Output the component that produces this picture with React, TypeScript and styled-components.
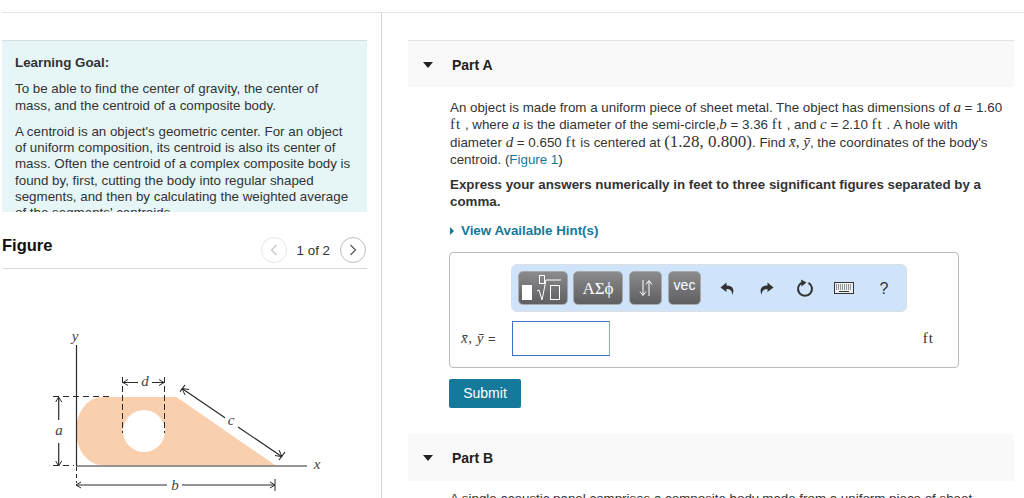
import React from "react";
import styled, { createGlobalStyle } from "styled-components";

const GlobalStyle = createGlobalStyle`
  html, body { margin: 0; padding: 0; background: #fff; }
  body { font-family: "Liberation Sans", Arial, sans-serif; color: #333; }
`;

const Page = styled.div`
  width: 1024px;
  height: 498px;
  overflow: hidden;
  padding-top: 12px;
  box-sizing: border-box;
`;

const Columns = styled.div`
  display: grid;
  grid-template-columns: 380px 1fr;
  height: 486px;
  margin-left: 2px;
  border-top: 1px solid #e2e4e6;
`;

const LeftColumn = styled.div`
  border-right: 1px solid #cdd5de;
  padding-top: 27px;
`;

const GoalBox = styled.div`
  width: 365px;
  height: 172px;
  box-sizing: border-box;
  overflow: hidden;
  background: #e6f6f7;
  border-top: 1px solid #d5dde2;
  padding: 14px 13px 0;
  font-size: 13.35px;
  line-height: 16.3px;
`;

const GoalTitle = styled.div`
  font-weight: bold;
  margin-bottom: 10px;
`;

const GoalText = styled.p`
  margin: 0 0 10px;
`;

const FigureHead = styled.div`
  width: 365px;
  height: 57px;
  box-sizing: border-box;
  display: flex;
  align-items: center;
  justify-content: space-between;
  border-bottom: 1px solid #d5d9dd;
  padding-top: 11px;
`;

const FigureTitle = styled.h3`
  margin: 0;
  font-size: 16.5px;
  color: #111;
`;

const Pager = styled.div`
  display: flex;
  align-items: center;
  gap: 10px;
  font-size: 13.35px;
  margin-right: 1px;
  margin-top: 8px;
`;

const PagerButton = styled.div<{ $off?: boolean }>`
  width: 24px;
  height: 24px;
  border-radius: 50%;
  border: 1px solid ${(p) => (p.$off ? "#e6e6e6" : "#bdbdbd")};
  display: flex;
  align-items: center;
  justify-content: center;
  color: ${(p) => (p.$off ? "#c4c4c4" : "#555")};
`;

const PagerCount = styled.span`
  margin-top: 2px;
`;

const FigureArt = styled.svg`
  display: block;
  margin: 51px 0 0 28px;
`;

const RightColumn = styled.div`
  padding: 27px 10px 0 26px;
`;

const PartHead = styled.div<{ $top?: boolean }>`
  height: 47px;
  display: flex;
  align-items: center;
  gap: 19px;
  padding: ${(p) => (p.$top ? "2px" : "0")} 0 0 15px;
  background: #f9f9f9;
  border-top: ${(p) => (p.$top ? "1px solid #e2e2e2" : "none")};
  box-sizing: border-box;
  font-size: 14px;
  font-weight: bold;
  color: #222;
`;

const Caret = styled.span`
  width: 0;
  height: 0;
  border-left: 5.500px solid transparent;
  border-right: 5.500px solid transparent;
  border-top: 6px solid #222;
`;

const PartBody = styled.div`
  padding: 12px 9px 0 42px;
  font-size: 13.35px;
  line-height: 17px;
`;

const Para = styled.p`
  margin: 0;
`;

const BoldPara = styled.p`
  margin: 9px 0 0;
  font-weight: bold;
  line-height: 16.5px;
`;

const Var = styled.i`
  font-family: "Liberation Serif", serif;
  font-size: 15px;
  line-height: 1;
`;

const Unit = styled.span`
  font-family: "Liberation Serif", serif;
  font-size: 15px;
  letter-spacing: 1px;
  line-height: 1;
`;

const BigMath = styled.span`
  font-family: "Liberation Serif", serif;
  font-size: 17px;
  line-height: 1;
`;

const Link = styled.span`
  color: #14799b;
`;

const Hint = styled.div`
  display: flex;
  align-items: center;
  gap: 7px;
  margin-top: 12px;
  font-weight: bold;
  color: #14799b;
`;

const HintCaret = styled.span`
  width: 0;
  height: 0;
  border-top: 4px solid transparent;
  border-bottom: 4px solid transparent;
  border-left: 4px solid #14799b;
`;

const AnswerBox = styled.div`
  width: 510px;
  height: 116px;
  box-sizing: border-box;
  margin: 13px 0 0 -1px;
  border: 1px solid #bcbcbc;
  border-radius: 4px;
  padding: 11px 24px 0 11px;
`;

const Toolbar = styled.div`
  width: 396px;
  height: 48px;
  box-sizing: border-box;
  margin-left: 50px;
  display: flex;
  align-items: center;
  padding-left: 6px;
  background: #cfe4fb;
  border: 1px solid #dcdfe2;
  border-radius: 6px;
`;

const ToolButton = styled.div<{ $w: number; $gap: number }>`
  width: ${(p) => p.$w}px;
  height: 34px;
  margin-right: ${(p) => p.$gap}px;
  box-sizing: border-box;
  border: 1px solid #a9a9a9;
  border-radius: 5px;
  background: linear-gradient(#8b8b8d, #5f5f61);
  color: #fff;
  display: flex;
  align-items: center;
  justify-content: center;
  flex: none;
`;

const SymbolText = styled.span`
  font-family: "Liberation Serif", serif;
  font-size: 17px;
`;

const VecText = styled.span`
  font-size: 14px;
  margin-top: -5px;
`;

const IconSlot = styled.div<{ $w: number }>`
  width: ${(p) => p.$w}px;
  display: flex;
  justify-content: center;
  flex: none;
  color: #333;
`;

const HelpMark = styled.span`
  font-size: 16px;
  color: #333;
`;

const AnswerRow = styled.div`
  display: flex;
  align-items: center;
  margin-top: 9px;
`;

const AnswerLabel = styled.div`
  width: 51px;
  font-size: 13px;
  letter-spacing: 0.5px;
  color: #444;
`;

const AnswerInput = styled.div`
  width: 98px;
  height: 35px;
  box-sizing: border-box;
  border: 1px solid #3b6fc9;
  border-right-color: #8aa8e0;
`;

const AnswerUnit = styled(Unit)`
  margin-left: auto;
`;

const SubmitButton = styled.div`
  width: 72px;
  height: 29px;
  margin: 11px 0 0 -1px;
  border-radius: 2px;
  background: #14799b;
  color: #fff;
  font-size: 14px;
  display: flex;
  align-items: center;
  justify-content: center;
`;

const PartB = styled.div`
  margin-top: 26px;
`;

const PartBText = styled(PartBody)`
  padding-top: 9px;
  white-space: nowrap;
  overflow: hidden;
`;

const FigureText = styled.text`
  font-family: "Liberation Serif", serif;
  font-style: italic;
  font-size: 15px;
  fill: #444;
  text-anchor: middle;
`;

function Figure() {
  return (
    <FigureArt width="310" height="178" viewBox="0 0 310 178">
      <path d="M72 77 H146.500 L245 145 H72 A26 34 0 0 1 72 77 Z" fill="#f9cfae" />
      <circle cx="114" cy="111" r="21" fill="#fff" />
      <g stroke="#2a2a2a" strokeWidth="1" fill="none">
        <path d="M46.500 25 V146 H277" strokeWidth="1.200" />
        <path d="M46.500 147 V163" strokeDasharray="4 3" />
        <path d="M23 76.500 H82 M23 145.500 H44" strokeDasharray="6 4" />
        <path d="M28.700 78 V100 M28.700 123 V145" strokeWidth="1.200" />
        <path d="M25.700 82 L28.700 77 L31.700 82 M25.700 141 L28.700 146 L31.700 141" />
        <path d="M92.500 57 V113 M134.500 57 V113" strokeDasharray="6 3" />
        <path d="M93 62.500 H108 M122 62.500 H134 M98 59.500 L93 62.500 L98 65.500 M129 59.500 L134 62.500 L129 65.500" />
        <path d="M152 68.500 L195 97.700 M208 107 L252 136.700 M150 71.700 L155 65 M249 140 L255 132" strokeWidth="1.200" />
        <path d="M152 68.500 L159 69.500 M152 68.500 L155 75 M252 136.700 L245 135.500 M252 136.700 L249 130" />
        <path d="M46 165 H137 M152 165 H245 M51 162 L46 165 L51 168 M240 162 L245 165 L240 168 M245 159 V171" />
      </g>
      <FigureText x="45" y="21">y</FigureText>
      <FigureText x="29" y="115">a</FigureText>
      <FigureText x="115" y="66">d</FigureText>
      <FigureText x="201" y="105">c</FigureText>
      <FigureText x="145" y="170">b</FigureText>
      <FigureText x="287" y="149">x</FigureText>
    </FigureArt>
  );
}

function TemplateIcon() {
  return (
    <svg width="46" height="30" viewBox="0 0 46 30" fill="none" stroke="#fff" strokeWidth="1">
      <rect x="2" y="12" width="10" height="15" fill="#fff" stroke="none" />
      <rect x="19.500" y="2.500" width="5" height="8" />
      <path d="M17 18 L19 17 L22 27 L26 7 H41" />
      <rect x="30.500" y="12.500" width="9" height="14" />
    </svg>
  );
}

function SortIcon() {
  return (
    <svg width="16" height="18" viewBox="0 0 16 18" fill="none" stroke="#fff" strokeWidth="1">
      <path d="M5 1 V16 M2 12.500 L5 16.500 L8 12.500 M11 17 V2 M8 5.500 L11 1.500 L14 5.500" />
    </svg>
  );
}

function UndoIcon({ flip }: { flip?: boolean }) {
  return (
    <svg width="15" height="15" viewBox="0 0 15 15" style={{ transform: flip ? "scaleX(-1)" : undefined }}>
      <path d="M6.500 1.500 L0.500 6.500 L6.500 11 V8 C10 8 12 9.500 12.500 14 C14.500 9 13.500 4.500 6.500 4.500 Z" fill="#333" />
    </svg>
  );
}

function ResetIcon() {
  return (
    <svg width="18" height="18" viewBox="0 0 18 18" fill="none">
      <path d="M5.500 3.800 A7 7 0 1 0 12.500 3.800" stroke="#333" strokeWidth="2" />
      <path d="M5 0.500 L10.500 3.500 L5.500 7.500 Z" fill="#333" />
    </svg>
  );
}

function KeyboardIcon() {
  return (
    <svg width="20" height="12" viewBox="0 0 20 12" fill="none">
      <rect x="0.500" y="0.500" width="19" height="11" fill="#eef2f5" stroke="#333" />
      <path d="M2 3 H18 M2 5 H18 M2 7 H18" stroke="#333" strokeDasharray="1 1" />
      <path d="M5 9.500 H15" stroke="#333" />
    </svg>
  );
}

function Chevron({ dir }: { dir: "left" | "right" }) {
  return (
    <svg width="8" height="12" viewBox="0 0 8 12" fill="none" stroke="currentColor" strokeWidth="1.200">
      <path d={dir === "left" ? "M6.500 1 L1.500 6 L6.500 11" : "M1.500 1 L6.500 6 L1.500 11"} />
    </svg>
  );
}

export default function App() {
  return (
    <Page>
      <GlobalStyle />
      <Columns>
        <LeftColumn>
          <GoalBox>
            <GoalTitle>Learning Goal:</GoalTitle>
            <GoalText>To be able to find the center of gravity, the center of mass, and the centroid of a composite body.</GoalText>
            <GoalText>
              A centroid is an object's geometric center. For an object of uniform composition, its centroid is also its center of mass. Often the centroid of a complex composite body is found by, first, cutting the body into regular shaped segments, and then by calculating the weighted average of the segments' centroids.
            </GoalText>
          </GoalBox>
          <FigureHead>
            <FigureTitle>Figure</FigureTitle>
            <Pager>
              <PagerButton $off><Chevron dir="left" /></PagerButton>
              <PagerCount>1 of 2</PagerCount>
              <PagerButton><Chevron dir="right" /></PagerButton>
            </Pager>
          </FigureHead>
          <Figure />
        </LeftColumn>
        <RightColumn>
          <PartHead $top><Caret />Part A</PartHead>
          <PartBody>
            <Para>
              An object is made from a uniform piece of sheet metal. The object has dimensions of <Var>a</Var> = 1.60 <Unit>ft</Unit> , where <Var>a</Var> is the diameter of the semi-circle,<Var>b</Var> = 3.36 <Unit>ft</Unit> , and <Var>c</Var> = 2.10 <Unit>ft</Unit> . A hole with diameter <Var>d</Var> = 0.650 <Unit>ft</Unit> is centered at <BigMath>(1.28, 0.800)</BigMath>. Find <Var>x̄, ȳ</Var>, the coordinates of the body's centroid. (<Link>Figure 1</Link>)
            </Para>
            <BoldPara>Express your answers numerically in feet to three significant figures separated by a comma.</BoldPara>
            <Hint><HintCaret /><span>View Available Hint(s)</span></Hint>
            <AnswerBox>
              <Toolbar>
                <ToolButton $w={50} $gap={5}><TemplateIcon /></ToolButton>
                <ToolButton $w={50} $gap={6}><SymbolText>ΑΣϕ</SymbolText></ToolButton>
                <ToolButton $w={33} $gap={6}><SortIcon /></ToolButton>
                <ToolButton $w={33} $gap={9}><VecText>vec</VecText></ToolButton>
                <IconSlot $w={34}><UndoIcon /></IconSlot>
                <IconSlot $w={45}><UndoIcon flip /></IconSlot>
                <IconSlot $w={32}><ResetIcon /></IconSlot>
                <IconSlot $w={46}><KeyboardIcon /></IconSlot>
                <IconSlot $w={34}><HelpMark>?</HelpMark></IconSlot>
              </Toolbar>
              <AnswerRow>
                <AnswerLabel><Var>x̄, ȳ</Var> =</AnswerLabel>
                <AnswerInput />
                <AnswerUnit>ft</AnswerUnit>
              </AnswerRow>
            </AnswerBox>
            <SubmitButton>Submit</SubmitButton>
          </PartBody>
          <PartB>
            <PartHead><Caret />Part B</PartHead>
            <PartBText>
              A single acoustic panel comprises a composite body made from a uniform piece of sheet
            </PartBText>
          </PartB>
        </RightColumn>
      </Columns>
    </Page>
  );
}
